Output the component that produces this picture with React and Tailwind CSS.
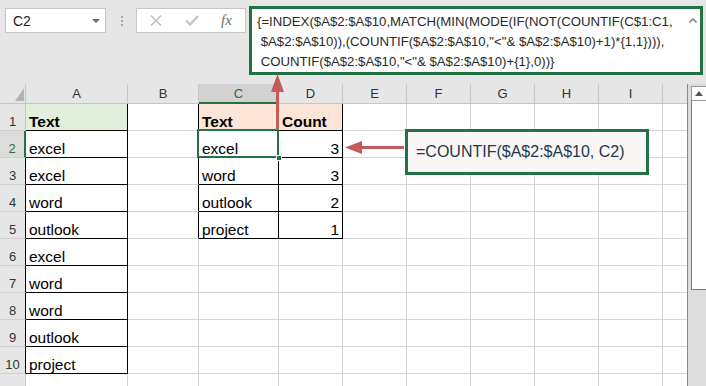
import React from "react";

const COLS = ["", "A", "B", "C", "D", "E", "F", "G", "H", "I", ""];
const colA = ["Text", "excel", "excel", "word", "outlook", "excel", "word", "word", "outlook", "project"];
const colC = ["Text", "excel", "word", "outlook", "project"];
const colD = ["Count", "3", "3", "2", "1"];

function HeaderCell({ c }) {
  if (c === 0) {
    return (
      <div className="relative bg-[#e6e6e6] border-r border-b border-[#c6c6c6]">
        <svg className="absolute left-[15px] top-[4px]" width="9" height="13" viewBox="0 0 9 13">
          <polygon points="9,0 9,13 0,13" fill="#b4b4b4" />
        </svg>
      </div>
    );
  }
  const isC = c === 3;
  const last = c === 10;
  return (
    <div
      className={
        "flex items-center justify-center text-[13px] leading-none " +
        (isC ? "bg-[#d2d2d2] text-[#217346] border-b-2 border-b-[#217346] " : "bg-[#e6e6e6] text-[#333] border-b border-b-[#c6c6c6] ") +
        (last ? "" : "border-r border-r-[#c6c6c6]")
      }
    >
      {COLS[c]}
    </div>
  );
}

function RowHeader({ r }) {
  let br = "border-r border-r-[#c6c6c6]";
  if (r === 2) br = "border-r-2 border-r-[#217346]";
  else if (r >= 3 && r <= 10) br = "border-r border-r-black";
  return (
    <div
      className={
        "flex items-end justify-center pb-[2px] text-[13px] leading-none border-b border-b-[#d0d0d0] " +
        (r === 2 ? "bg-[#dcdcdc] text-[#217346] " : "bg-[#e6e6e6] text-[#333] ") +
        br
      }
    >
      {r}
    </div>
  );
}

function DataCell({ r, c }) {
  let text = "";
  let bold = false;
  let right = false;
  let bg = "bg-white";
  if (c === 1 && r <= 10) {
    text = colA[r - 1];
    if (r === 1) {
      bold = true;
      bg = "bg-[#e2efda]";
    }
  }
  if (c === 3 && r <= 5) {
    text = colC[r - 1];
    if (r === 1) {
      bold = true;
      bg = "bg-[#fce4d6]";
    }
  }
  if (c === 4 && r <= 5) {
    text = colD[r - 1];
    if (r === 1) {
      bold = true;
      bg = "bg-[#fce4d6]";
    } else right = true;
  }

  const brBlack = (c === 1 && r <= 10) || ((c === 2 || c === 3 || c === 4) && r <= 5);
  const bbBlack = (c === 1 && r <= 10) || ((c === 3 || c === 4) && r <= 5);
  const last = c === 10;
  const br = last ? "" : brBlack ? "border-r border-r-black" : "border-r border-r-[#d4d4d4]";
  const bb = bbBlack ? "border-b border-b-black" : "border-b border-b-[#d4d4d4]";
  const selected = r === 2 && c === 3;

  return (
    <div
      className={
        "relative flex items-end pb-[1px] text-[15.5px] leading-none text-black whitespace-nowrap " +
        bg + " " + br + " " + bb + " " +
        (right ? "justify-end pr-[3px] " : "pl-[3px] ") +
        (bold ? "font-bold" : "")
      }
    >
      {text}
      {selected && (
        <>
          <div className="absolute -left-[2px] -top-[2px] -right-[1px] -bottom-[1px] border-2 border-[#217346] z-10" />
          <div className="absolute -right-[4px] -bottom-[4px] w-[6px] h-[6px] bg-[#217346] border border-white z-10" />
        </>
      )}
    </div>
  );
}

export default function App() {
  const rows = [];
  for (let r = 0; r <= 11; r++) {
    for (let c = 0; c <= 10; c++) {
      const key = r + "-" + c;
      if (r === 0) rows.push(<HeaderCell key={key} c={c} />);
      else if (c === 0) rows.push(<RowHeader key={key} r={r} />);
      else rows.push(<DataCell key={key} r={r} c={c} />);
    }
  }

  return (
    <div className="relative w-[706px] h-[386px] overflow-hidden bg-[#e6e6e6] font-['Liberation_Sans',Arial,sans-serif]">
      {/* Top bar */}
      <div className="h-[84px] flex items-start">
        <div className="ml-[5px] mt-[8px] w-[101px] h-[25px] bg-white border border-[#c6c6c6] flex items-center justify-between pl-[7px] pr-[5px]">
          <span className="text-[14px] text-[#1a1a1a] leading-none">C2</span>
          <svg width="8" height="4" viewBox="0 0 8 4">
            <polygon points="0,0 8,0 4,4" fill="#6e6e6e" />
          </svg>
        </div>
        <div className="ml-[15px] mt-[16px] flex flex-col gap-[2px]">
          <div className="w-[2px] h-[2px] bg-[#a8a8a8]" />
          <div className="w-[2px] h-[2px] bg-[#a8a8a8]" />
          <div className="w-[2px] h-[2px] bg-[#a8a8a8]" />
        </div>
        <div className="ml-[13px] mt-[8px] w-[110px] h-[25px] bg-white border border-[#c6c6c6] flex items-center">
          <svg className="ml-[13px]" width="12" height="11" viewBox="0 0 12 11">
            <path d="M1 0.5 L11 10.5 M11 0.5 L1 10.5" stroke="#bdbdbd" strokeWidth="1.5" fill="none" />
          </svg>
          <svg className="ml-[23px]" width="14" height="11" viewBox="0 0 14 11">
            <path d="M1 5.5 L5 9.5 L13 1" stroke="#c4c4c4" strokeWidth="2.4" fill="none" />
          </svg>
          <span className="ml-[22px] font-['Liberation_Serif',serif] italic text-[15px] leading-none text-[#6e6e6e]">fx</span>
        </div>
        <div className="ml-[3px] mt-[6px] w-[454px] h-[69px] bg-white border-[3px] border-[#217346] relative pl-[5px] pt-[3px]">
          <div className="text-[13.2px] leading-[20px] text-[#2a2a2a] whitespace-pre">
            <div>{'{=INDEX($A$2:$A$10,MATCH(MIN(MODE(IF(NOT(COUNTIF(C$1:C1,'}</div>
            <div>{' $A$2:$A$10)),(COUNTIF($A$2:$A$10,"<"& $A$2:$A$10)+1)*{1,1}))),'}</div>
            <div>{' COUNTIF($A$2:$A$10,"<"& $A$2:$A$10)+{1},0))}'}</div>
          </div>
          <svg className="absolute right-[3px] top-[9px]" width="8" height="5" viewBox="0 0 8 5">
            <path d="M0.5 4.5 L4 1 L7.5 4.5" stroke="#8a8a8a" strokeWidth="1.6" fill="none" />
          </svg>
        </div>
      </div>

      {/* Sheet body */}
      <div className="flex h-[302px]">
        <div className="w-[687px] overflow-hidden grid grid-cols-[26px_102px_71px_80px_64px_64px_64px_64px_64px_64px_24px] grid-rows-[20px_repeat(11,27px)] bg-white">
          {rows}
        </div>
        <div className="w-[19px] border-l border-l-[#8a8a8a] bg-[#dcdcdc] pl-[3px] pt-[2px] flex flex-col">
          <div className="h-[15px] bg-white border-l border-t border-b border-[#9a9a9a] flex items-center justify-center">
            <svg width="8" height="5" viewBox="0 0 8 5">
              <polygon points="0,5 8,5 4,0" fill="#555" />
            </svg>
          </div>
          <div className="h-[189px] bg-white border-l border-b border-[#7a7a7a]" />
        </div>
      </div>

      {/* Callout box */}
      <div className="absolute left-[405px] top-[129px] w-[244px] h-[46px] border-[3px] border-[#217346] bg-[#faf6f5] flex items-center pl-[8px] pb-[1px] z-20">
        <span className="text-[16px] leading-none text-[#203a4c]">=COUNTIF($A$2:$A$10, C2)</span>
      </div>

      {/* Arrows */}
      <svg className="absolute left-0 top-0 z-30 pointer-events-none" width="706" height="386" viewBox="0 0 706 386">
        <line x1="277.5" y1="90" x2="277.5" y2="130" stroke="#c45a5a" strokeWidth="3" />
        <polygon points="277.5,74 271,92 284,92" fill="#c45a5a" />
        <line x1="360" y1="147.5" x2="404" y2="147.5" stroke="#c45a5a" strokeWidth="3" />
        <polygon points="345,147.5 362,141 362,154" fill="#c45a5a" />
      </svg>
    </div>
  );
}
